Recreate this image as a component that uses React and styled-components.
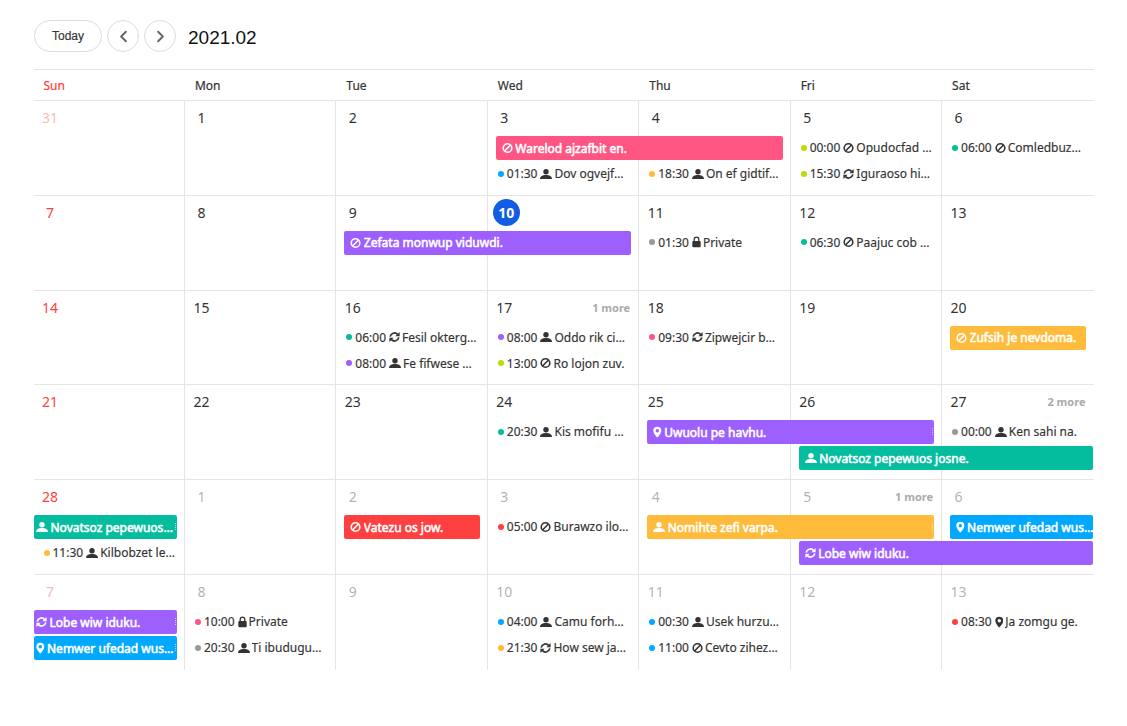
import React from "react";
import styled, { createGlobalStyle } from "styled-components";
import { ChevronLeft, ChevronRight } from "lucide-react";

const colors = {
  pink: "#ff5583",
  purple: "#9e5fff",
  green: "#03bd9e",
  blue: "#00a9ff",
  orange: "#ffbb3b",
  red: "#ff4040",
  gray: "#999999",
  lime: "#bbdc00",
};

const GlobalStyle = createGlobalStyle`
  html, body {
    margin: 0;
    background: #fff;
  }
  body {
    font-family: "Noto Sans", "Liberation Sans", sans-serif;
    color: #333;
  }
`;

const Page = styled.div`
  width: 1060px;
  padding: 20px 33.5px 0 33.5px;
`;

const Toolbar = styled.div`
  display: flex;
  align-items: center;
  gap: 5px;
  height: 32px;
  margin-bottom: 17px;
  padding-left: 0.5px;
`;

const TodayButton = styled.button`
  width: 68px;
  height: 32px;
  padding: 0 0 1px;
  background: #fff;
  border: 1px solid #ddd;
  border-radius: 25px;
  color: #333;
  font: 12px "Liberation Sans", Arial, sans-serif;
  -webkit-text-stroke: 0.15px #333;
`;

const NavButton = styled.button`
  display: flex;
  align-items: center;
  justify-content: center;
  width: 32px;
  height: 32px;
  padding: 0;
  background: #fff;
  border: 1px solid #ddd;
  border-radius: 50%;
  color: #666;
`;

const Title = styled.span`
  margin-left: 7px;
  padding-top: 3px;
  color: #111;
  font: 19px "Liberation Sans", Arial, sans-serif;
`;

const WeekdayRow = styled.div`
  display: grid;
  grid-template-columns: repeat(7, 1fr);
  height: 30px;
  border-top: 1px solid #e5e5e5;
  border-bottom: 1px solid #e5e5e5;
`;

const Weekday = styled.div`
  padding-left: 10px;
  color: ${(p) => (p.$sunday ? colors.red : "#333")};
  font-size: 12px;
  line-height: 31px;
  -webkit-text-stroke: 0.2px ${(p) => (p.$sunday ? colors.red : "#333")};
`;

const Week = styled.div`
  box-sizing: border-box;
  height: 94.83px;
  display: grid;
  grid-template-columns: repeat(7, minmax(0, 1fr));
  grid-template-rows: 33px 24px 24px 1fr;
  row-gap: 2px;
  border-bottom: ${(p) => (p.$last ? "none" : "1px solid #e5e5e5")};
`;

const Cell = styled.div`
  grid-column: ${(p) => p.$col};
  grid-row: 1 / -1;
  display: flex;
  justify-content: space-between;
  align-items: flex-start;
  border-right: ${(p) => (p.$col === 7 ? "none" : "1px solid #e5e5e5")};
`;

const dateColor = (p) => {
  if (p.$today) return "#fff";
  if (p.$sunday) return p.$muted ? "rgba(255, 64, 64, 0.4)" : colors.red;
  return p.$muted ? "rgba(51, 51, 51, 0.4)" : "#333";
};

const DateNumber = styled.span`
  width: ${(p) => (p.$today ? "27px" : "24px")};
  height: 27px;
  margin: 3px 0 0 ${(p) => (p.$today ? "5px" : "4.5px")};
  border-radius: 50%;
  background: ${(p) => (p.$today ? "#135de6" : "transparent")};
  color: ${dateColor};
  font-size: 14px;
  font-weight: ${(p) => (p.$today ? 700 : 400)};
  line-height: 27px;
  text-align: center;
`;

const More = styled.span`
  margin: 3px 8px 0 0;
  color: #aaa;
  font-size: 11px;
  font-weight: 700;
  line-height: 27px;
`;

const Bar = styled.div`
  grid-column: ${(p) => p.$col} / span ${(p) => p.$span};
  grid-row: ${(p) => p.$slot + 1};
  z-index: 1;
  display: flex;
  align-items: center;
  min-width: 0;
  height: 24px;
  margin-left: ${(p) => (p.$fromPrev ? "0.5px" : "8px")};
  margin-right: ${(p) => (p.$toNext ? "0.5px" : "8px")};
  padding-left: ${(p) => (p.$fromPrev ? "2px" : "6px")};
  border-radius: 2px;
  background: ${(p) => colors[p.$color]};
  color: #fff;
  font-size: 12px;
`;

// the picture has regular-width letters thickened, not the real bold cut
const BarTitle = styled.span`
  flex: 1;
  min-width: 0;
  margin: 0 -2px 0 2.5px;
  overflow: hidden;
  white-space: nowrap;
  text-overflow: ellipsis;
  -webkit-text-stroke: 0.55px #fff;
`;

const Handle = styled.span`
  flex: 0 0 3px;
  height: 8px;
  background-image: conic-gradient(rgba(255, 255, 255, 0.6) 25%, transparent 0);
  background-size: 2px 2px;
`;

const Timed = styled.div`
  grid-column: ${(p) => p.$col};
  grid-row: ${(p) => p.$slot + 1};
  z-index: 1;
  display: flex;
  align-items: center;
  min-width: 0;
  height: 23px;
  padding: 0 8px 0 10px;
  color: #333;
  font-size: 12px;
  white-space: nowrap;
  -webkit-text-stroke: 0.15px #333;
`;

const Dot = styled.span`
  flex: 0 0 6px;
  height: 6px;
  margin-right: 3px;
  border-radius: 50%;
  background: ${(p) => colors[p.$color]};
`;

const TimedIcon = styled.span`
  display: flex;
  margin: 0 2px 0 3px;
`;

const TimedText = styled.span`
  overflow: hidden;
  text-overflow: ellipsis;
`;

const IconBox = styled.svg`
  flex: none;
  height: 12px;
  width: ${(p) => p.$w}px;
  fill: currentColor;
`;

const iconWidth = { ban: 11, user: 12, repeat: 11, pin: 8.5, lock: 9 };

const Icon = ({ name }) => (
  <IconBox viewBox={`0 0 ${iconWidth[name]} 12`} $w={iconWidth[name]}>
    {name === "ban" && (
      <g fill="none" stroke="currentColor" strokeWidth="1.6">
        <circle cx="5.5" cy="6" r="4.3" />
        <path d="M8.5 3 2.5 9" />
      </g>
    )}
    {name === "user" && (
      <>
        <circle cx="6" cy="3.7" r="2.7" />
        <path d="M0 11C0 8.4 2.6 7 6 7s6 1.4 6 4z" />
      </>
    )}
    {name === "repeat" && (
      <>
        <path d="M1.2 5.6A4.3 4.3 0 0 1 8.6 3.4" fill="none" stroke="currentColor" strokeWidth="1.7" />
        <path d="M10.6 1v4.2H6.4z" />
        <path d="M9.8 6.4A4.3 4.3 0 0 1 2.4 8.6" fill="none" stroke="currentColor" strokeWidth="1.7" />
        <path d="M.4 11V6.8h4.2z" />
      </>
    )}
    {name === "pin" && (
      <path
        fillRule="evenodd"
        d="M4.3.7a4 4 0 0 0-4 4c0 2.8 4 6.8 4 6.8s4-4 4-6.8a4 4 0 0 0-4-4zm0 2.3a1.7 1.7 0 1 1 0 3.4 1.7 1.7 0 0 1 0-3.4z"
      />
    )}
    {name === "lock" && (
      <>
        <rect x="0.3" y="5" width="8.4" height="6.2" rx="1" />
        <path d="M2.2 5.5V3.4a2.3 2.3 0 0 1 4.6 0v2.1" fill="none" stroke="currentColor" strokeWidth="1.3" />
      </>
    )}
  </IconBox>
);

const bar = (col, span, slot, color, icon, title, opts = {}) => ({ type: "bar", col, span, slot, color, icon, title, ...opts });
const timed = (col, slot, color, time, icon, title) => ({ type: "timed", col, slot, color, time, icon, title });

const weeks = [
  {
    dates: [31, 1, 2, 3, 4, 5, 6],
    muted: [0],
    events: [
      bar(4, 2, 1, "pink", "ban", "Warelod ajzafbit en."),
      timed(4, 2, "blue", "01:30", "user", "Dov ogvejf…"),
      timed(5, 2, "orange", "18:30", "user", "On ef gidtif…"),
      timed(6, 1, "lime", "00:00", "ban", "Opudocfad …"),
      timed(6, 2, "lime", "15:30", "repeat", "Iguraoso hi…"),
      timed(7, 1, "green", "06:00", "ban", "Comledbuz…"),
    ],
  },
  {
    dates: [7, 8, 9, 10, 11, 12, 13],
    today: 3,
    events: [
      bar(3, 2, 1, "purple", "ban", "Zefata monwup viduwdi."),
      timed(5, 1, "gray", "01:30", "lock", "Private"),
      timed(6, 1, "green", "06:30", "ban", "Paajuc cob …"),
    ],
  },
  {
    dates: [14, 15, 16, 17, 18, 19, 20],
    more: { 3: "1 more" },
    events: [
      timed(3, 1, "green", "06:00", "repeat", "Fesil okterg…"),
      timed(3, 2, "purple", "08:00", "user", "Fe fifwese …"),
      timed(4, 1, "purple", "08:00", "user", "Oddo rik ci…"),
      timed(4, 2, "lime", "13:00", "ban", "Ro lojon zuv."),
      timed(5, 1, "pink", "09:30", "repeat", "Zipwejcir b…"),
      bar(7, 1, 1, "orange", "ban", "Zufsih je nevdoma."),
    ],
  },
  {
    dates: [21, 22, 23, 24, 25, 26, 27],
    more: { 6: "2 more" },
    events: [
      timed(4, 1, "green", "20:30", "user", "Kis mofifu …"),
      bar(5, 2, 1, "purple", "pin", "Uwuolu pe havhu.", { handle: true }),
      bar(6, 2, 2, "green", "user", "Novatsoz pepewuos josne.", { toNext: true }),
      timed(7, 1, "gray", "00:00", "user", "Ken sahi na."),
    ],
  },
  {
    dates: [28, 1, 2, 3, 4, 5, 6],
    muted: [1, 2, 3, 4, 5, 6],
    more: { 5: "1 more" },
    events: [
      bar(1, 1, 1, "green", "user", "Novatsoz pepewuos …", { fromPrev: true, handle: true }),
      timed(1, 2, "orange", "11:30", "user", "Kilbobzet le…"),
      bar(3, 1, 1, "red", "ban", "Vatezu os jow."),
      timed(4, 1, "red", "05:00", "ban", "Burawzo ilo…"),
      bar(5, 2, 1, "orange", "user", "Nomihte zefi varpa.", { handle: true }),
      bar(6, 2, 2, "purple", "repeat", "Lobe wiw iduku.", { toNext: true }),
      bar(7, 1, 1, "blue", "pin", "Nemwer ufedad wus…", { toNext: true }),
    ],
  },
  {
    dates: [7, 8, 9, 10, 11, 12, 13],
    muted: [0, 1, 2, 3, 4, 5, 6],
    events: [
      bar(1, 1, 1, "purple", "repeat", "Lobe wiw iduku.", { fromPrev: true, handle: true }),
      bar(1, 1, 2, "blue", "pin", "Nemwer ufedad wus…", { fromPrev: true, handle: true }),
      timed(2, 1, "pink", "10:00", "lock", "Private"),
      timed(2, 2, "gray", "20:30", "user", "Ti ibudugu…"),
      timed(4, 1, "blue", "04:00", "user", "Camu forh…"),
      timed(4, 2, "orange", "21:30", "repeat", "How sew ja…"),
      timed(5, 1, "blue", "00:30", "user", "Usek hurzu…"),
      timed(5, 2, "blue", "11:00", "ban", "Cevto zihez…"),
      timed(7, 1, "red", "08:30", "pin", "Ja zomgu ge."),
    ],
  },
];

const weekdays = ["Sun", "Mon", "Tue", "Wed", "Thu", "Fri", "Sat"];

export default function App() {
  return (
    <Page>
      <GlobalStyle />
      <Toolbar>
        <TodayButton>Today</TodayButton>
        <NavButton>
          <ChevronLeft size={19} strokeWidth={2.4} />
        </NavButton>
        <NavButton>
          <ChevronRight size={19} strokeWidth={2.4} />
        </NavButton>
        <Title>2021.02</Title>
      </Toolbar>
      <WeekdayRow>
        {weekdays.map((day, i) => (
          <Weekday key={day} $sunday={i === 0}>
            {day}
          </Weekday>
        ))}
      </WeekdayRow>
      {weeks.map((week, w) => (
        <Week key={w} $last={w === weeks.length - 1}>
          {week.dates.map((date, i) => (
            <Cell key={i} $col={i + 1}>
              <DateNumber
                $sunday={i === 0}
                $today={week.today === i}
                $muted={week.muted?.includes(i)}
              >
                {date}
              </DateNumber>
              {week.more?.[i] && <More>{week.more[i]}</More>}
            </Cell>
          ))}
          {week.events.map((ev, i) =>
            ev.type === "bar" ? (
              <Bar
                key={i}
                $col={ev.col}
                $span={ev.span}
                $slot={ev.slot}
                $color={ev.color}
                $fromPrev={ev.fromPrev}
                $toNext={ev.toNext}
              >
                <Icon name={ev.icon} />
                <BarTitle>{ev.title}</BarTitle>
                {ev.handle && <Handle />}
              </Bar>
            ) : (
              <Timed key={i} $col={ev.col} $slot={ev.slot}>
                <Dot $color={ev.color} />
                {ev.time}
                <TimedIcon>
                  <Icon name={ev.icon} />
                </TimedIcon>
                <TimedText>{ev.title}</TimedText>
              </Timed>
            )
          )}
        </Week>
      ))}
    </Page>
  );
}
